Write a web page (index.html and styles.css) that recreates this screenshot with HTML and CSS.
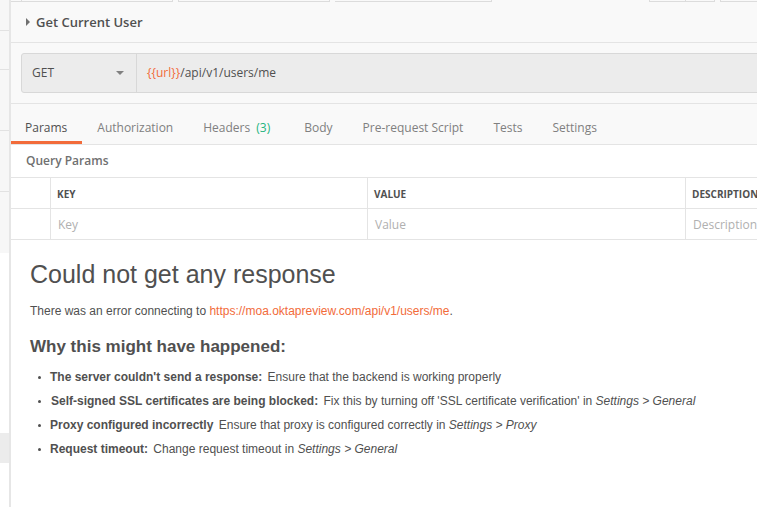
FILE: index.html
```html
<!DOCTYPE html>
<html lang="en">
<head>
<meta charset="utf-8">
<title>Get Current User</title>
<link rel="stylesheet" href="styles.css">
</head>
<body>
<div class="app">
  <aside class="sidebar">
    <div class="sb-item sb-a"></div>
    <div class="sb-item sb-b"></div>
    <div class="sb-item sb-c"></div>
    <div class="sb-item sb-d"></div>
    <div class="sb-item sb-e"></div>
    <div class="sb-space"></div>
    <div class="sb-item sb-active"></div>
  </aside>
  <main class="main">
    <div class="tabstrip">
      <span class="ts ts-pad"></span>
      <span class="ts ts-1"></span>
      <span class="ts ts-2"></span>
      <span class="ts ts-3"></span>
      <span class="ts ts-cur"></span>
      <span class="ts ts-4"></span>
      <span class="ts ts-5"></span>
      <span class="ts ts-6"></span>
    </div>
    <div class="req-header">
      <span class="caret"></span>
      <span class="req-name">Get Current User</span>
    </div>
    <div class="url-section">
      <div class="url-bar">
        <div class="method">
          <span>GET</span>
          <span class="dd"></span>
        </div>
        <div class="url"><span class="var">{{url}}</span>/api/v1/users/me</div>
      </div>
    </div>
    <nav class="tabs">
      <span class="tab active">Params</span>
      <span class="tab">Authorization</span>
      <span class="tab tab-wide">Headers <span class="count">(3)</span></span>
      <span class="tab">Body</span>
      <span class="tab">Pre-request Script</span>
      <span class="tab">Tests</span>
      <span class="tab">Settings</span>
    </nav>
    <section class="params">
      <div class="params-title">Query Params</div>
      <div class="ptable">
        <div class="cell head"></div>
        <div class="cell head">KEY</div>
        <div class="cell head">VALUE</div>
        <div class="cell head">DESCRIPTION</div>
        <div class="cell ph"></div>
        <div class="cell ph">Key</div>
        <div class="cell ph">Value</div>
        <div class="cell ph">Description</div>
      </div>
    </section>
    <section class="response">
      <h1 class="resp-title">Could not get any response</h1>
      <p class="resp-text">There was an error connecting to <a class="link">https://moa.oktapreview.com/api/v1/users/me</a>.</p>
      <h2 class="resp-sub">Why this might have happened:</h2>
      <ul class="reasons">
        <li><b>The server couldn't send a response:</b> Ensure that the backend is working properly</li>
        <li class="shift"><b>Self-signed SSL certificates are being blocked:</b> Fix this by turning off 'SSL certificate verification' in <i>Settings &gt; General</i></li>
        <li><b>Proxy configured incorrectly</b> Ensure that proxy is configured correctly in <i>Settings &gt; Proxy</i></li>
        <li><b>Request timeout:</b> Change request timeout in <i>Settings &gt; General</i></li>
      </ul>
    </section>
  </main>
</div>
</body>
</html>
```

FILE: styles.css
```css
* { box-sizing: border-box; }
html, body { margin: 0; padding: 0; }
body {
  width: 757px;
  height: 507px;
  overflow: hidden;
  background: #fff;
  font-family: "Open Sans", "Liberation Sans", sans-serif;
  color: #505050;
}
.app {
  display: flex;
  height: 507px;
}
.sidebar {
  width: 11px;
  flex: 0 0 11px;
  border-right: 2px solid #e6e6e6;
  display: flex;
  flex-direction: column;
  background: #fff;
}
.sb-item { background: #f7f7f7; border-bottom: 1px solid #e2e2e2; }
.sb-a { height: 31px; }
.sb-b { height: 39px; }
.sb-c { height: 61px; }
.sb-d { height: 61px; }
.sb-e { height: 61px; border-bottom: none; }
.sb-space { height: 180px; }
.sb-active { height: 30px; background: #ececec; border-bottom: none; }

.main {
  flex: 1;
  min-width: 0;
  overflow: hidden;
  display: flex;
  flex-direction: column;
}

.tabstrip {
  height: 2px;
  display: flex;
  background: #f9f9f9;
}
.ts { height: 2px; border-bottom: 1px solid #dcdcdc; background: #f9f9f9; }
.ts-pad { width: 10px; }
.ts-1 { width: 152px; border-left: 1px solid #dcdcdc; border-right: 1px solid #dcdcdc; }
.ts-2 { width: 152px; border-left: 1px solid #dcdcdc; border-right: 1px solid #dcdcdc; margin-left: 5px; }
.ts-3 { width: 157px; border-right: 1px solid #dcdcdc; margin-left: 5px; }
.ts-cur { width: 158px; border-bottom: none; border-right: 1px solid #dcdcdc; }
.ts-4 { width: 36px; border-right: 1px solid #dcdcdc; }
.ts-5 { width: 29px; border-right: 1px solid #dcdcdc; }
.ts-6 { flex: 1; border-left: 1px solid #dcdcdc; margin-left: 5px; }

.req-header {
  height: 41px;
  display: flex;
  align-items: center;
  padding-left: 15px;
  background: #f9f9f9;
  border-bottom: 1px solid #e4e4e4;
}
.caret {
  width: 0;
  height: 0;
  border-top: 4px solid transparent;
  border-bottom: 4px solid transparent;
  border-left: 4px solid #707070;
  margin-right: 6px;
}
.req-name {
  font-size: 13px;
  font-weight: 600;
  line-height: 18px;
  color: #505050;
}

.url-section {
  background: #f9f9f9;
  padding: 10px 0 10px 10px;
  border-bottom: 1px solid #e4e4e4;
  overflow: hidden;
}
.url-bar {
  width: 800px;
  height: 40px;
  display: flex;
  background: #ececec;
  border: 1px solid #d8d8d8;
  border-radius: 3px;
}
.method {
  width: 115px;
  flex: 0 0 115px;
  display: flex;
  align-items: center;
  justify-content: space-between;
  padding: 0 12px 0 10px;
  border-right: 1px solid #d8d8d8;
  font-size: 12px;
  line-height: 16px;
  color: #505050;
}
.dd {
  width: 0;
  height: 0;
  border-left: 4px solid transparent;
  border-right: 4px solid transparent;
  border-top: 4px solid #808080;
}
.url {
  display: flex;
  align-items: center;
  padding-left: 10px;
  font-size: 12px;
  line-height: 16px;
  color: #505050;
}
.var { color: #f26b3a; }

.tabs {
  height: 41px;
  display: flex;
  background: #f9f9f9;
  border-bottom: 1px solid #e4e4e4;
}
.tab {
  padding: 16px 15px 0;
  font-size: 12px;
  line-height: 16px;
  color: #808080;
  white-space: nowrap;
}
.tab:first-child { padding-left: 14px; }
.tab.tab-wide { padding-right: 19px; }
.tab.active {
  color: #505050;
  border-bottom: 3px solid #f26b3a;
}
.count { color: #26b47f; margin-left: 3px; }

.params { background: #fff; }
.params-title {
  padding: 8px 0 0 15px;
  margin-bottom: 8px;
  font-size: 12px;
  font-weight: 600;
  line-height: 16px;
  color: #707070;
}
.ptable {
  display: grid;
  grid-template-columns: 40px 317px 318px 317px;
  border-top: 1px solid #e4e4e4;
}
.cell {
  height: 31px;
  display: flex;
  align-items: center;
  padding-left: 6px;
  border-bottom: 1px solid #e4e4e4;
  border-right: 1px solid #e4e4e4;
  white-space: nowrap;
  overflow: hidden;
}
.cell.head {
  font-size: 10px;
  font-weight: 700;
  line-height: 14px;
  color: #505050;
  padding-top: 1px;
}
.cell.ph {
  font-size: 12px;
  line-height: 16px;
  color: #b0b0b0;
  padding-left: 7px;
  padding-top: 1px;
}

.response {
  padding: 19px 0 0 19px;
  font-family: "Liberation Sans", Arial, sans-serif;
  color: #505050;
}
.resp-title {
  margin: 0;
  font-size: 25px;
  font-weight: 400;
  line-height: 30px;
  color: #505050;
}
.resp-text {
  margin: 14px 0 0;
  font-size: 12px;
  line-height: 16px;
}
.link { color: #f26b3a; }
.resp-sub {
  margin: 18px 0 0;
  font-size: 17px;
  font-weight: 700;
  line-height: 20px;
  color: #505050;
}
.reasons {
  list-style: none;
  margin: 8px 0 0;
  padding: 0;
}
.reasons li {
  position: relative;
  padding-left: 20px;
  font-size: 12px;
  line-height: 24px;
  color: #505050;
}
.reasons li::before {
  content: "";
  position: absolute;
  left: 8px;
  top: 11px;
  width: 3px;
  height: 3px;
  border-radius: 50%;
  background: #505050;
}
.reasons li.shift { padding-left: 21px; }
.reasons b { font-weight: 700; color: #505050; margin-right: 2px; }
.reasons i { font-style: italic; }
```
